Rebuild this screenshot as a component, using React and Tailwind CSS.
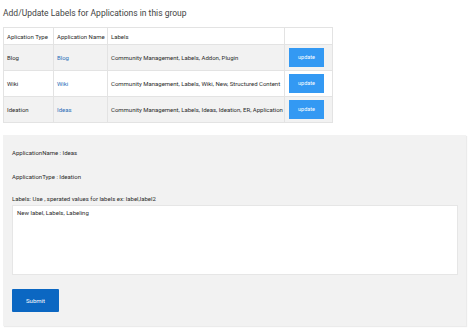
import React from 'react';

const rows = [
  { type: 'Blog', name: 'Blog', labels: 'Community Management, Labels, Addon, Plugin', bg: 'bg-[#f2f2f2]' },
  { type: 'Wiki', name: 'Wiki', labels: 'Community Management, Labels, Wiki, New, Structured Content', bg: 'bg-white' },
  { type: 'Ideation', name: 'Ideas', labels: 'Community Management, Labels, Ideas, Ideation, ER, Application', bg: 'bg-[#f2f2f2]' },
];

export default function App() {
  return (
    <div className="w-[474px] h-[333px] bg-white text-[#333] overflow-hidden" style={{ fontFamily: 'Roboto, Lato, sans-serif' }}>
      <div className="pl-[3px] pt-[7px] text-[8.5px] leading-[12px] text-[#444]">
        Add/Update Labels for Applications in this group
      </div>

      <table className="ml-[3px] mt-[8px] border-collapse text-[6px] text-[#2b2b2b] w-[329px] table-fixed">
        <colgroup>
          <col className="w-[50px]" />
          <col className="w-[54px]" />
          <col className="w-[177px]" />
          <col className="w-[48px]" />
        </colgroup>
        <thead>
          <tr className="h-[17px] bg-white">
            <th className="border border-[#e3e3e3] px-[3px] text-left font-normal whitespace-nowrap">Aplication Type</th>
            <th className="border border-[#e3e3e3] px-[3px] text-left font-normal whitespace-nowrap">Application Name</th>
            <th className="border border-[#e3e3e3] px-[3px] text-left font-normal">Labels</th>
            <th className="border border-[#e3e3e3]"></th>
          </tr>
        </thead>
        <tbody>
          {rows.map((r) => (
            <tr key={r.type} className={`h-[26px] ${r.bg}`}>
              <td className="border border-[#e3e3e3] px-[3px]">{r.type}</td>
              <td className="border border-[#e3e3e3] px-[3px] text-[#2a6fb8]">{r.name}</td>
              <td className="border border-[#e3e3e3] px-[3px] whitespace-nowrap">{r.labels}</td>
              <td className="border border-[#e3e3e3] px-[4px]">
                <button className="w-[35px] h-[19px] bg-[#3399f3] text-white text-[5.5px] block">update</button>
              </td>
            </tr>
          ))}
        </tbody>
      </table>

      <div className="ml-[3px] mt-[12px] w-[463px] h-[191px] bg-[#f2f2f2] shadow-[1px_1px_1px_rgba(0,0,0,0.08)] pl-[9px] pt-[13px] text-[6px] text-[#2b2b2b]">
        <div className="leading-[10px]">ApplicationName : Ideas</div>
        <div className="leading-[10px] mt-[14px]">ApplicationType : Ideation</div>
        <div className="leading-[10px] mt-[12px]">Labels: Use , sperated values for labels ex: label,label2</div>
        <div className="w-[446px] h-[70px] bg-white border border-[#e6e6e6] mt-[1px] px-[4px] pt-[2px] leading-[10px]">
          New label, Labels, Labeling
        </div>
        <button className="mt-[14px] w-[47px] h-[23px] bg-[#0b67c2] text-white text-[6px] rounded-[1px] block">Submit</button>
      </div>
    </div>
  );
}
